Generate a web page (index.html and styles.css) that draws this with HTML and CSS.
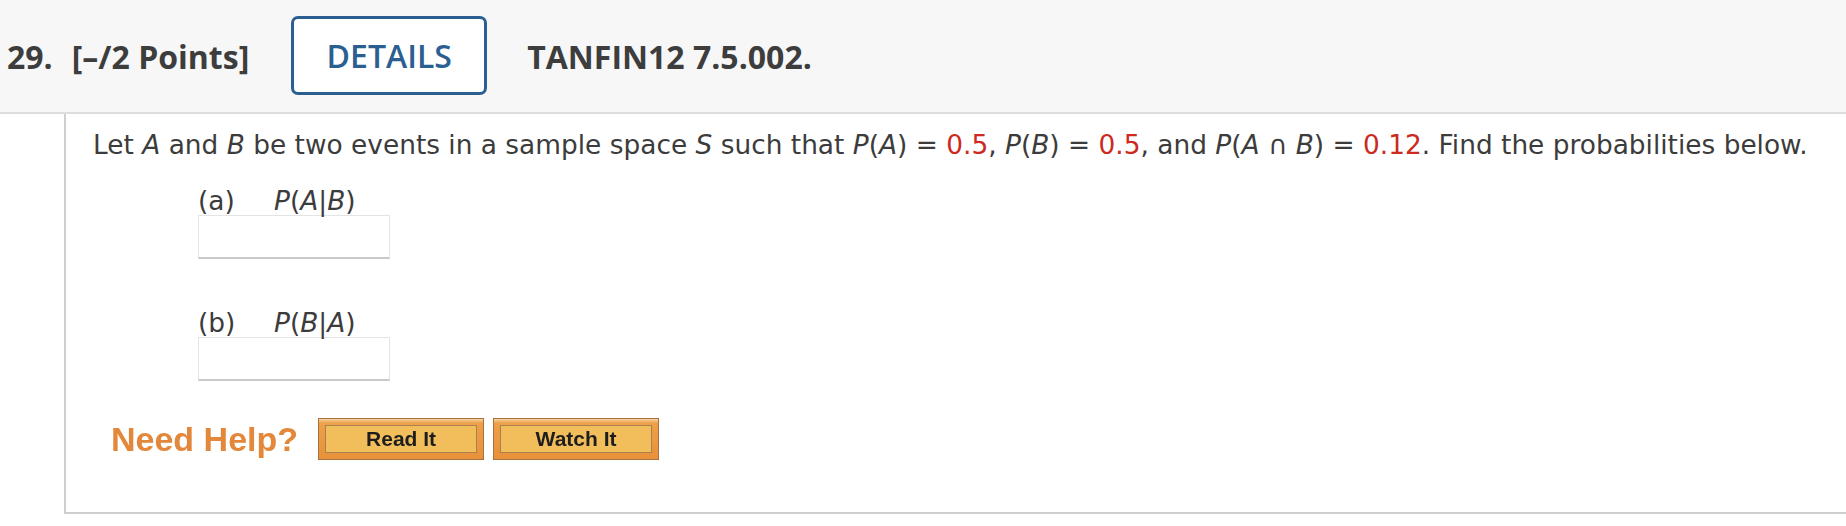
FILE: index.html
```html
<!DOCTYPE html>
<html lang="en">
<head>
<meta charset="utf-8">
<title>Question 29</title>
<link rel="stylesheet" href="styles.css">
</head>
<body>
<div class="question">
  <div class="q-header">
    <span class="q-num">29.</span>
    <span class="q-points">[–/2 Points]</span>
    <button class="details-btn" type="button">DETAILS</button>
    <span class="q-code">TANFIN12 7.5.002.</span>
  </div>

  <div class="q-body">
    <p class="prompt">Let <i>A</i> and <i>B</i> be two events in a sample space <i>S</i> such that <i>P</i>(<i>A</i>) = <span class="given">0.5</span>, <i>P</i>(<i>B</i>) = <span class="given">0.5</span>, and <i>P</i>(<i>A</i> ∩ <i>B</i>) = <span class="given">0.12</span>. Find the probabilities below.</p>

    <div class="part">
      <div class="part-label"><span class="part-letter">(a)</span><span class="part-expr"><i>P</i>(<i>A</i>|<i>B</i>)</span></div>
      <input class="answer-box" type="text" aria-label="P(A|B)">
    </div>

    <div class="part part-b">
      <div class="part-label"><span class="part-letter">(b)</span><span class="part-expr"><i>P</i>(<i>B</i>|<i>A</i>)</span></div>
      <input class="answer-box" type="text" aria-label="P(B|A)">
    </div>

    <div class="help">
      <span class="help-title">Need Help?</span>
      <button class="help-btn" type="button"><span class="help-btn-face">Read It</span></button>
      <button class="help-btn" type="button"><span class="help-btn-face">Watch It</span></button>
    </div>
  </div>
</div>
</body>
</html>
```

FILE: styles.css
```css
html, body {
  margin: 0;
  padding: 0;
  background: #ffffff;
}

.question {
  width: 100%;
}

/* ---- question header bar ---- */
.q-header {
  display: flex;
  align-items: center;
  height: 112px;
  padding-left: 7px;
  background: #f7f7f7;
  border-bottom: 2px solid #dddddd;
  font-family: "Open Sans", "DejaVu Sans", sans-serif;
  font-size: 32px;
  font-weight: 700;
  color: #3d3d3d;
}

.q-num {
  margin-right: 19px;
}

.details-btn {
  box-sizing: border-box;
  width: 196px;
  height: 79px;
  margin: -2px 40px 0 42px;
  padding: 0;
  background: #ffffff;
  border: 3px solid #2b5f92;
  border-radius: 7px;
  font-family: "Open Sans", "DejaVu Sans", sans-serif;
  font-size: 32px;
  font-weight: 600;
  color: #2b5f92;
}

/* ---- question body ---- */
.q-body {
  margin-left: 64px;
  padding: 16px 0 52px 27px;
  border-left: 2px solid #cfcfcf;
  border-bottom: 2px solid #cfcfcf;
  font-family: "DejaVu Sans", Verdana, sans-serif;
  font-size: 26.4px;
  color: #3c3c3c;
}

.prompt {
  margin: 0;
  line-height: 30px;
  white-space: nowrap;
}

.given {
  color: #cc2a1e;
}

.part {
  margin: 27px 0 0 105px;
}

.part-b {
  margin-top: 50px;
}

.part-label {
  display: flex;
  line-height: 28px;
}

.part-letter {
  width: 76px;
}

.answer-box {
  display: block;
  box-sizing: border-box;
  width: 192px;
  height: 44px;
  margin: 0;
  padding: 0 8px;
  background: #ffffff;
  border: 1px solid #e4e4e4;
  border-bottom: 2px solid #c9c9c9;
  border-radius: 0;
  font-family: "DejaVu Sans", Verdana, sans-serif;
  font-size: 22px;
}

/* ---- help row ---- */
.help {
  display: flex;
  align-items: center;
  margin: 37px 0 0 18px;
  height: 42px;
}

.help-title {
  margin-right: 20px;
  font-family: "Liberation Sans", Arial, sans-serif;
  font-size: 34px;
  font-weight: 700;
  color: #e3883a;
  filter: blur(0.4px);
}

.help-btn {
  box-sizing: border-box;
  width: 166px;
  height: 42px;
  margin: 0 9px 0 0;
  padding: 6px;
  border: 1px solid #a7733a;
  background: linear-gradient(#f7d4a6 0, #eea04a 4px, #e8913a 100%);
  cursor: pointer;
}

.help-btn-face {
  display: flex;
  align-items: center;
  justify-content: center;
  box-sizing: border-box;
  height: 100%;
  border: 1px solid #a98050;
  background: #f2be5b;
  font-family: "Liberation Sans", Arial, sans-serif;
  font-size: 21px;
  font-weight: 700;
  color: #1e1e1e;
  filter: blur(0.3px);
}
```
